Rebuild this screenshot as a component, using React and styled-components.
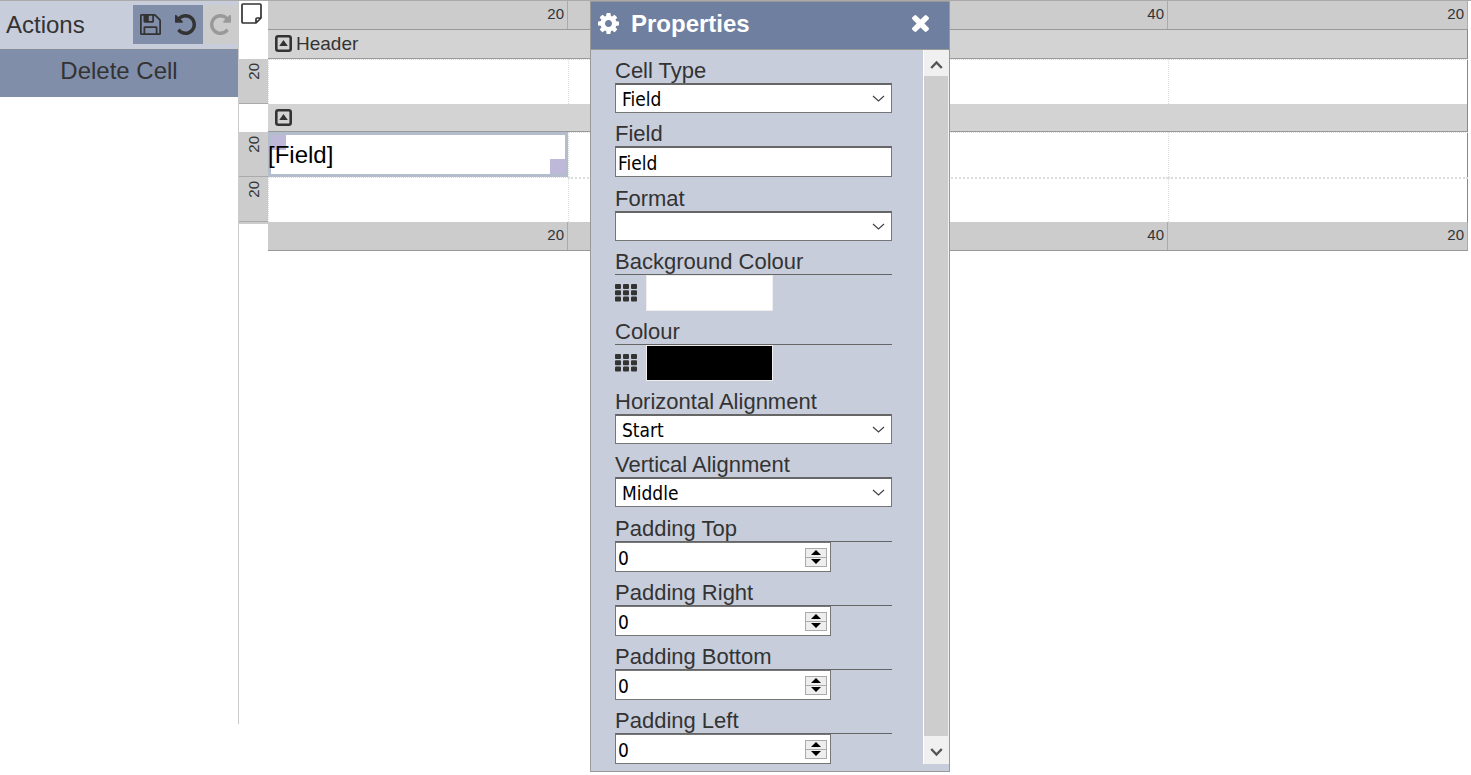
import React from "react";
import styled, { createGlobalStyle, css } from "styled-components";

const Global = createGlobalStyle`
  *, *::before, *::after { box-sizing: border-box; }
  body {
    margin: 0;
    background: #fff;
    color: #333;
    font-family: "Liberation Sans", Arial, sans-serif;
  }
  button, input, select { font: inherit; color: inherit; margin: 0; }
  button { padding: 0; border: 0; background: none; cursor: pointer; }
  svg { display: block; flex: none; }
`;

const Page = styled.div`
  position: relative;
  display: flex;
  align-items: flex-start;
  min-height: 100vh;
  border-top: 1px solid #aaa;
`;

/* ---------- actions side bar ---------- */

const Sidebar = styled.aside`
  flex: none;
  width: 239px;
  height: calc(100vh - 52px);
  border-right: 1px solid #ccc;
`;

const SidebarHead = styled.header`
  display: flex;
  align-items: center;
  height: 48px;
  padding-left: 6px;
  background: #c7cddb;
  border-bottom: 1px solid #ccc;
`;

const SidebarTitle = styled.h2`
  flex: 1;
  margin: 0;
  font-size: 24px;
  line-height: 28px;
  font-weight: 400;
`;

const ToolButton = styled.button`
  display: flex;
  align-items: center;
  justify-content: center;
  width: 35px;
  height: 39px;
  background: #818eaa;
  &:disabled { background: #ccc; color: #999; cursor: default; }
`;

const ActionButton = styled.button`
  display: block;
  width: 100%;
  height: 48px;
  padding-bottom: 4px;
  background: #818eaa;
  font-size: 24px;
  line-height: 28px;
`;

/* ---------- rulers and canvas ---------- */

const Gutter = styled.div`
  display: flex;
  flex-direction: column;
  flex: none;
  width: 29px;
`;

const GutterSpace = styled.div`
  height: ${(p) => p.$height}px;
  padding: 2px;
`;

const RowMark = styled.div`
  height: 45px;
  padding: 4px 6px 0 0;
  background: #ccc;
  border-bottom: 1px solid #aaa;
  display: flex;
  justify-content: flex-end;
  span {
    align-self: flex-start;
    writing-mode: vertical-rl;
    transform: rotate(180deg);
    font-size: 15px;
    line-height: 17px;
  }
`;

const GutterEnd = styled.div`
  height: 2px;
  background: #ccc;
`;

const Canvas = styled.main`
  flex: 1;
  min-width: 0;
  margin-right: 3px;
`;

const columns = css`
  display: grid;
  grid-template-columns: 1fr 2fr 1fr;
`;

const Ruler = styled.div`
  ${columns}
  height: 29px;
  background: #ccc;
  border-bottom: 1px solid #999;
`;

const RulerCell = styled.div`
  padding: 4px 3px 0 0;
  border-right: 1px solid #aaa;
  text-align: right;
  font-size: 15px;
  line-height: 17px;
`;

const Sections = styled.div`
  border-right: 1px solid #888;
`;

const Band = styled.div`
  display: flex;
  align-items: center;
  gap: 4px;
  height: ${(p) => p.$height}px;
  padding: 0 0 1px 7px;
  background: #d3d3d3;
  border-bottom: 1px solid #999;
  font-size: 19px;
  line-height: 22px;
`;

const Row = styled.div`
  ${columns}
  height: 45px;
  margin-right: -1px;
`;

const Cell = styled.div`
  border-top: ${(p) => (p.$divided ? 2 : 1)}px dotted #ddd;
  border-left: 1px dotted #ddd;
`;

const SelectedCell = styled.div`
  position: relative;
  display: flex;
  align-items: center;
  color: #000;
  font-size: 24px;
  line-height: 28px;
  span { position: relative; }
`;

const Selection = styled.div`
  position: absolute;
  inset: 0;
  border: 3px solid #b4bdce;
`;

const Handle = styled.i`
  position: absolute;
  width: 15px;
  height: 15px;
  background: #bfb9d9;
  ${(p) => (p.$end ? "right: 0; bottom: 0;" : "left: 0; top: 0;")}
`;

/* ---------- properties window ---------- */

const Panel = styled.section`
  position: absolute;
  top: 0;
  left: 590px;
  width: 360px;
  padding-bottom: 7px;
  background: #c7cddb;
  border: 1px solid #999;
`;

const PanelHead = styled.header`
  display: flex;
  align-items: center;
  gap: 12px;
  height: 48px;
  padding: 0 20px 4px 7px;
  background: #6f7f9f;
  border-bottom: 1px solid #999;
  color: #fff;
`;

const PanelTitle = styled.h2`
  flex: 1;
  margin: 0;
  font-size: 24px;
  line-height: 28px;
  font-weight: 700;
`;

const PanelBody = styled.div`
  display: flex;
  justify-content: space-between;
`;

const Form = styled.form`
  width: 301px;
  padding-left: 24px;
`;

const Group = styled.div`
  & + & { padding-top: 1px; }
`;

const Label = styled.label`
  display: block;
  padding-top: 8px;
  font-size: 22px;
  line-height: 25px;
  ${(p) => p.$ruled && "border-bottom: 1px solid #666;"}
`;

const controlText = css`
  color: #000;
  font-family: "DejaVu Sans Condensed", "Noto Sans", sans-serif;
  font-size: 19px;
  line-height: 24px;
`;

const frame = css`
  background: #fff;
  border: 1px solid #767676;
  border-radius: 0;
  outline: none;
`;

const SelectBox = styled.div`
  position: relative;
  svg {
    position: absolute;
    right: 7px;
    top: 12px;
    pointer-events: none;
  }
`;

const Select = styled.select`
  ${frame}
  ${controlText}
  display: block;
  appearance: none;
  width: 100%;
  height: 30px;
  padding: 1px 24px 0 6px;
  border-top: 2px solid #666;
`;

const TextInput = styled.input`
  ${frame}
  ${controlText}
  display: block;
  width: 100%;
  height: 31px;
  padding: 1px 2px 0;
  border-top: 2px solid #666;
`;

const NumberBox = styled.div`
  ${frame}
  display: flex;
  align-items: center;
  width: 216px;
  height: 30px;
  padding-right: 3px;
`;

const NumberInput = styled.input`
  ${controlText}
  flex: 1;
  min-width: 0;
  height: 28px;
  padding: 2px 2px 0;
  border: 0;
  outline: none;
  background: none;
  appearance: textfield;
  &::-webkit-inner-spin-button { appearance: none; margin: 0; }
`;

const Spinner = styled.div`
  width: 22px;
  border: 1px solid #aaa;
  background: #eee;
`;

const StepButton = styled.button`
  display: flex;
  align-items: center;
  justify-content: center;
  width: 20px;
  height: 8px;
  & + & { height: 9px; border-top: 1px solid #aaa; }
`;

const ColourRow = styled.div`
  display: flex;
  align-items: center;
  gap: 9px;
`;

const Swatch = styled.button`
  width: 127px;
  height: 36px;
  border: 1px solid #eee;
  background: ${(p) => p.$colour};
`;

const ScrollBar = styled.div`
  display: flex;
  flex-direction: column;
  width: 26px;
  background: #f0f0f0;
  border-left: 1px solid #fff;
`;

const ScrollButton = styled.button`
  display: flex;
  align-items: center;
  justify-content: center;
  height: ${(p) => p.$height}px;
  padding-top: 3px;
  background: #f0f0f0;
`;

const ScrollThumb = styled.div`
  flex: 1;
  margin-right: 1px;
  background: #cdcdcd;
`;

/* ---------- icons ---------- */

const SaveIcon = () => (
  <svg width="21" height="21" viewBox="0 128 1536 1536" fill="currentColor" aria-hidden="true">
    <path d="M384 1536h768v-384h-768v384zm896 0h128v-896q0-14-10-38.500t-20-34.500l-281-281q-10-10-34-20t-39-10v416q0 40-28 68t-68 28h-576q-40 0-68-28t-28-68v-416h-128v1280h128v-416q0-40 28-68t68-28h832q40 0 68 28t28 68v416zm-384-928v-320q0-13-9.500-22.500t-22.500-9.500h-192q-13 0-22.500 9.500t-9.500 22.500v320q0 13 9.500 22.500t22.500 9.500h192q13 0 22.500-9.500t9.500-22.500zm640 32v928q0 40-28 68t-68 28h-1344q-40 0-68-28t-28-68v-1344q0-40 28-68t68-28h928q40 0 88 20t76 48l280 280q28 28 48 76t20 88z" />
  </svg>
);

const TurnIcon = ({ forward }) => (
  <svg width="21" height="21" viewBox="128 128 1536 1536" fill="currentColor" aria-hidden="true">
    <path
      transform={forward ? "translate(1792 0) scale(-1 1)" : undefined}
      d="M1664 896q0 156-61 298t-164 245-245 164-298 61q-172 0-327-72.500t-264-204.500q-7-10-6.500-22.500t8.500-20.500l137-138q10-9 25-9 16 2 23 12 73 95 179 147t225 52q104 0 198.500-40.500t163.500-109.500 109.500-163.500 40.500-198.500-40.500-198.500-109.500-163.500-163.500-109.500-198.500-40.500q-98 0-188 35.500t-160 101.500l137 138q31 30 14 69-17 40-59 40h-448q-26 0-45-19t-19-45v-448q0-42 40-59 39-17 69 14l130 129q107-101 244.500-156.500t284.500-55.500q156 0 298 61t245 164 164 245 61 298z"
    />
  </svg>
);

const NoteIcon = () => (
  <svg width="21" height="21" viewBox="0 0 21 21" fill="none" stroke="#333" strokeWidth="1.700" strokeLinejoin="round" aria-hidden="true">
    <path d="M1 2a1 1 0 0 1 1-1h17a1 1 0 0 1 1 1v13l-5 5H2a1 1 0 0 1-1-1zM20 15h-4a1 1 0 0 0-1 1v4" />
  </svg>
);

const CollapseIcon = () => (
  <svg width="17" height="17" viewBox="0 0 17 17" aria-hidden="true">
    <rect x="1.300" y="1.300" width="14.400" height="14.400" rx="2" fill="none" stroke="#333" strokeWidth="2.600" />
    <path d="M8.500 5l4.300 6h-8.600z" fill="#333" />
  </svg>
);

const CogIcon = () => (
  <svg width="21" height="21" viewBox="128 128 1536 1536" fill="currentColor" aria-hidden="true">
    <path d="M1152 896q0-106-75-181t-181-75-181 75-75 181 75 181 181 75 181-75 75-181zm512-109v222q0 12-8 23t-20 13l-185 28q-19 54-39 91 35 50 107 138 10 12 10 25t-9 23q-27 37-99 108t-94 71q-12 0-26-9l-138-108q-44 23-91 38-16 136-29 186-7 28-36 28h-222q-14 0-24.500-8.500t-11.500-21.500l-28-184q-49-16-90-37l-141 107q-10 9-25 9-14 0-25-11-126-114-165-168-7-10-7-23 0-12 8-23 15-21 51-66.500t54-70.500q-27-50-41-99l-183-27q-13-2-21-12.500t-8-23.500v-222q0-12 8-23t19-13l186-28q14-46 39-92-40-57-107-138-10-12-10-24 0-10 9-23 26-36 98.500-107.500t94.500-71.500q13 0 26 10l138 107q44-23 91-38 16-136 29-186 7-28 36-28h222q14 0 24.500 8.500t11.500 21.500l28 184q49 16 90 37l142-107q9-9 24-9 13 0 25 10 129 119 165 170 7 8 7 22 0 12-8 23-15 21-51 66.500t-54 70.500q26 50 41 98l183 28q13 2 21 12.500t8 23.500z" />
  </svg>
);

const CloseIcon = () => (
  <svg width="17" height="17" viewBox="302 366 1188 1188" fill="currentColor" aria-hidden="true">
    <path d="M1490 1322q0 40-28 68l-136 136q-28 28-68 28t-68-28l-294-294-294 294q-28 28-68 28t-68-28l-136-136q-28-28-28-68t28-68l294-294-294-294q-28-28-28-68t28-68l136-136q28-28 68-28t68 28l294 294 294-294q28-28 68-28t68 28l136 136q28 28 28 68t-28 68l-294 294 294 294q28 28 28 68z" />
  </svg>
);

const PaletteIcon = () => (
  <svg width="22" height="18" viewBox="0 0 22 18" fill="#333" aria-hidden="true">
    {[0, 6.2, 12.4].map((y) =>
      [0, 8, 16].map((x) => <rect key={`${x}-${y}`} x={x} y={y} width="6" height="5" rx="1" />)
    )}
  </svg>
);

const DropIcon = () => (
  <svg width="13" height="8" viewBox="0 0 13 8" fill="none" stroke="#444" strokeWidth="1.200" aria-hidden="true">
    <path d="M1 1l5.500 5L12 1" />
  </svg>
);

const ScrollIcon = ({ down }) => (
  <svg width="13" height="10" viewBox="0 0 13 10" fill="none" stroke="#555" strokeWidth="2.400" aria-hidden="true">
    <path d={down ? "M1.200 2l5.300 5.500L11.800 2" : "M1.200 8l5.300-5.500L11.800 8"} />
  </svg>
);

const StepIcon = ({ down }) => (
  <svg width="10" height="5" viewBox="0 0 10 5" aria-hidden="true">
    <path d={down ? "M0 0h10L5 5z" : "M0 5h10L5 0z"} fill="#000" />
  </svg>
);

/* ---------- form parts ---------- */

function SelectField({ id, label, value }) {
  return (
    <>
      <Label htmlFor={id}>{label}</Label>
      <SelectBox>
        <Select id={id} defaultValue={value}>
          <option value={value}>{value}</option>
        </Select>
        <DropIcon />
      </SelectBox>
    </>
  );
}

function ColourField({ id, label, colour }) {
  return (
    <>
      <Label htmlFor={id} $ruled>{label}</Label>
      <ColourRow>
        <button type="button" aria-label={`${label} palette`}><PaletteIcon /></button>
        <Swatch type="button" id={id} $colour={colour} />
      </ColourRow>
    </>
  );
}

function NumberField({ id, label }) {
  return (
    <>
      <Label htmlFor={id} $ruled>{label}</Label>
      <NumberBox>
        <NumberInput id={id} type="number" defaultValue="0" />
        <Spinner>
          <StepButton type="button" aria-label={`Increase ${label}`}><StepIcon /></StepButton>
          <StepButton type="button" aria-label={`Decrease ${label}`}><StepIcon down /></StepButton>
        </Spinner>
      </NumberBox>
    </>
  );
}

const ColumnRuler = () => (
  <Ruler>
    <RulerCell>20</RulerCell>
    <RulerCell>40</RulerCell>
    <RulerCell>20</RulerCell>
  </Ruler>
);

const EmptyRow = ({ divided }) => (
  <Row>
    <Cell />
    <Cell $divided={divided} />
    <Cell $divided={divided} />
  </Row>
);

export default function App() {
  return (
    <>
      <Global />
      <Page>
        <Sidebar>
          <SidebarHead>
            <SidebarTitle>Actions</SidebarTitle>
            <ToolButton type="button" aria-label="Save"><SaveIcon /></ToolButton>
            <ToolButton type="button" aria-label="Undo"><TurnIcon /></ToolButton>
            <ToolButton type="button" aria-label="Redo" disabled><TurnIcon forward /></ToolButton>
          </SidebarHead>
          <ActionButton type="button">Delete Cell</ActionButton>
        </Sidebar>

        <Gutter>
          <GutterSpace $height={58}>
            <button type="button" aria-label="Page"><NoteIcon /></button>
          </GutterSpace>
          <RowMark><span>20</span></RowMark>
          <GutterSpace $height={28} />
          <RowMark><span>20</span></RowMark>
          <RowMark><span>20</span></RowMark>
          <GutterEnd />
        </Gutter>

        <Canvas>
          <ColumnRuler />
          <Sections>
            <Band $height={29}>
              <button type="button" aria-label="Collapse header"><CollapseIcon /></button>
              Header
            </Band>
            <EmptyRow />
            <Band $height={28}>
              <button type="button" aria-label="Collapse section"><CollapseIcon /></button>
            </Band>
            <Row>
              <SelectedCell>
                <Selection>
                  <Handle />
                  <Handle $end />
                </Selection>
                <span>[Field]</span>
              </SelectedCell>
              <Cell />
              <Cell />
            </Row>
            <EmptyRow divided />
          </Sections>
          <ColumnRuler />
        </Canvas>

        <Panel>
          <PanelHead>
            <CogIcon />
            <PanelTitle>Properties</PanelTitle>
            <button type="button" aria-label="Close"><CloseIcon /></button>
          </PanelHead>
          <PanelBody>
            <Form>
              <Group>
                <SelectField id="cell-type" label="Cell Type" value="Field" />
                <Label htmlFor="field">Field</Label>
                <TextInput id="field" type="text" defaultValue="Field" />
              </Group>
              <Group>
                <SelectField id="format" label="Format" value="" />
                <ColourField id="background" label="Background Colour" colour="#fff" />
                <ColourField id="colour" label="Colour" colour="#000" />
                <SelectField id="h-align" label="Horizontal Alignment" value="Start" />
                <SelectField id="v-align" label="Vertical Alignment" value="Middle" />
              </Group>
              <Group>
                <NumberField id="pad-top" label="Padding Top" />
                <NumberField id="pad-right" label="Padding Right" />
                <NumberField id="pad-bottom" label="Padding Bottom" />
                <NumberField id="pad-left" label="Padding Left" />
              </Group>
            </Form>
            <ScrollBar>
              <ScrollButton type="button" aria-label="Scroll up" $height={26}><ScrollIcon /></ScrollButton>
              <ScrollThumb />
              <ScrollButton type="button" aria-label="Scroll down" $height={28}><ScrollIcon down /></ScrollButton>
            </ScrollBar>
          </PanelBody>
        </Panel>
      </Page>
    </>
  );
}
